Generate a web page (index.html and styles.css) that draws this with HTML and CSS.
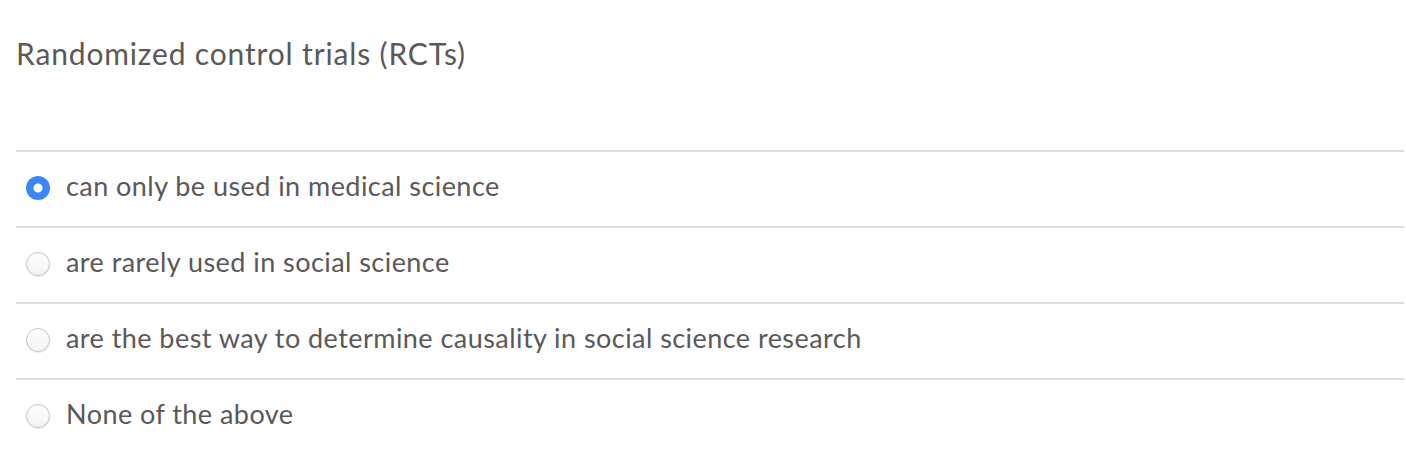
FILE: index.html
```html
<!DOCTYPE html>
<html>
<head>
<meta charset="utf-8">
<link rel="stylesheet" href="styles.css">
</head>
<body>
<div class="question">
  <div class="prompt">Randomized control trials (RCTs)</div>
  <ul class="answers">
    <li class="answer"><span class="radio checked"></span><span class="label">can only be used in medical science</span></li>
    <li class="answer"><span class="radio"></span><span class="label">are rarely used in social science</span></li>
    <li class="answer"><span class="radio"></span><span class="label">are the best way to determine causality in social science research</span></li>
    <li class="answer"><span class="radio"></span><span class="label">None of the above</span></li>
  </ul>
</div>
</body>
</html>
```
FILE: styles.css
```css
html, body {
  margin: 0;
  padding: 0;
  background: #fff;
}
body {
  font-family: Lato, "Open Sans", sans-serif;
  color: #5a5858;
}
.question {
  padding: 30px 2px 0 16px;
}
.prompt {
  font-size: 30px;
  line-height: 46px;
  letter-spacing: 0.85px;
  margin-bottom: 74px;
}
.answers {
  list-style: none;
  margin: 0;
  padding: 0;
}
.answer {
  display: flex;
  align-items: center;
  height: 74px;
  border-top: 2px solid #dddddd;
  font-size: 27px;
  letter-spacing: 0.45px;
}
.radio {
  width: 22px;
  height: 22px;
  border-radius: 50%;
  border: 1px solid #c4c4c4;
  background: linear-gradient(#ffffff, #f3f3f3);
  box-shadow: 0 1px 1px rgba(0, 0, 0, 0.08);
  margin: 0 16px 2px 10px;
  box-sizing: content-box;
  flex: none;
}
.radio.checked {
  width: 24px;
  height: 24px;
  border: none;
  box-shadow: none;
  background: radial-gradient(circle, #fff 0, #fff 4px, #3b86f7 5px);
}
.label {
  line-height: 30px;
  margin-bottom: 7px;
}
```
